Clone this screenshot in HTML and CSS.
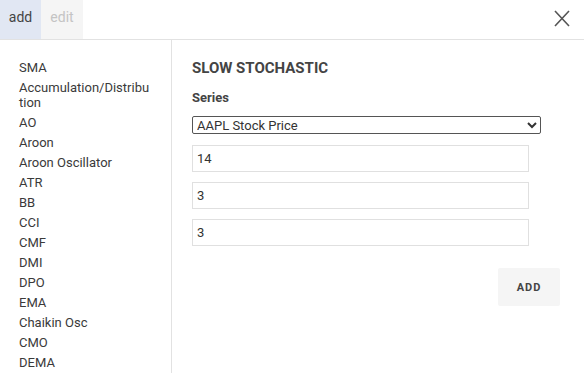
FILE: index.html
```html
<!DOCTYPE html>
<html>
<head>
<meta charset="utf-8">
<link rel="stylesheet" href="styles.css">
</head>
<body>
<div class="dialog">
  <div class="header">
    <div class="tabs">
      <div class="tab active">add</div>
      <div class="tab">edit</div>
    </div>
    <button class="close" aria-label="close">
      <svg width="16" height="17" viewBox="0 0 16 17"><path d="M1 1L15 16M15 1L1 16" stroke="#555" stroke-width="1.6" fill="none"/></svg>
    </button>
  </div>
  <div class="body">
    <ul class="list">
      <li>SMA</li>
      <li>Accumulation/Distribution</li>
      <li>AO</li>
      <li>Aroon</li>
      <li>Aroon Oscillator</li>
      <li>ATR</li>
      <li>BB</li>
      <li>CCI</li>
      <li>CMF</li>
      <li>DMI</li>
      <li>DPO</li>
      <li>EMA</li>
      <li>Chaikin Osc</li>
      <li>CMO</li>
      <li>DEMA</li>
    </ul>
    <div class="main">
      <h2 class="title">SLOW STOCHASTIC</h2>
      <div class="label">Series</div>
      <select class="select"><option>AAPL Stock Price</option></select>
      <input class="field" type="text" value="14">
      <input class="field" type="text" value="3">
      <input class="field" type="text" value="3">
      <div class="actions"><button class="add">ADD</button></div>
    </div>
  </div>
</div>
</body>
</html>
```
FILE: styles.css
```css
* { box-sizing: border-box; }
html, body { margin: 0; padding: 0; background: #fff; }
body { font-family: Roboto, "Liberation Sans", sans-serif; color: #333; font-size: 13px; overflow: hidden; }
.dialog { width: 584px; height: 373px; display: flex; flex-direction: column; }
.header { height: 40px; border-bottom: 1px solid #e2e2e2; display: flex; justify-content: space-between; align-items: stretch; }
.tabs { display: flex; }
.tab { width: 41px; display: flex; align-items: center; justify-content: center; font-size: 14px; color: #c4c4c4; background: #f5f5f5; padding-bottom: 6px; }
.tab:last-child { width: 42px; }
.tab.active { background: #e1e7f3; color: #444; }
.close { background: none; border: 0; padding: 0; width: 44px; display: flex; align-items: center; justify-content: center; margin-top: -2px; cursor: pointer; }
.body { flex: 1; display: flex; min-height: 0; }
.list { list-style: none; margin: 0; padding: 17px 19px 0 19px; width: 172px; border-right: 1px solid #e2e2e2; overflow: hidden; flex: none; }
.list li { padding: 3px 0 2px; line-height: 15px; font-size: 13px; color: #3a3a3a; word-break: break-all; }
.main { flex: 1; padding: 20px 24px 0 20px; display: flex; flex-direction: column; align-items: flex-start; }
.title { margin: 0; font-size: 15px; line-height: 16px; font-weight: 700; color: #444; }
.label { margin-top: 14px; font-size: 13px; line-height: 16px; font-weight: 700; color: #444; }
.select { margin-top: 10px; width: 349px; height: 18px; font-family: inherit; font-size: 13px; color: #333; border: 1px solid #555; border-radius: 2px; background: #fff; padding: 0; }
.field { width: 337px; height: 27px; margin-top: 11px; border: 1px solid #e0e0e0; font-family: inherit; font-size: 13px; color: #333; padding: 0 4px; outline: none; }
.field + .field { margin-top: 10px; }
.actions { align-self: stretch; display: flex; justify-content: flex-end; margin-top: 22px; }
.add { width: 62px; height: 38px; border: 0; border-radius: 2px; background: #f5f5f5; font-family: inherit; font-size: 11px; font-weight: 700; letter-spacing: 1px; color: #444; cursor: pointer; }
```
